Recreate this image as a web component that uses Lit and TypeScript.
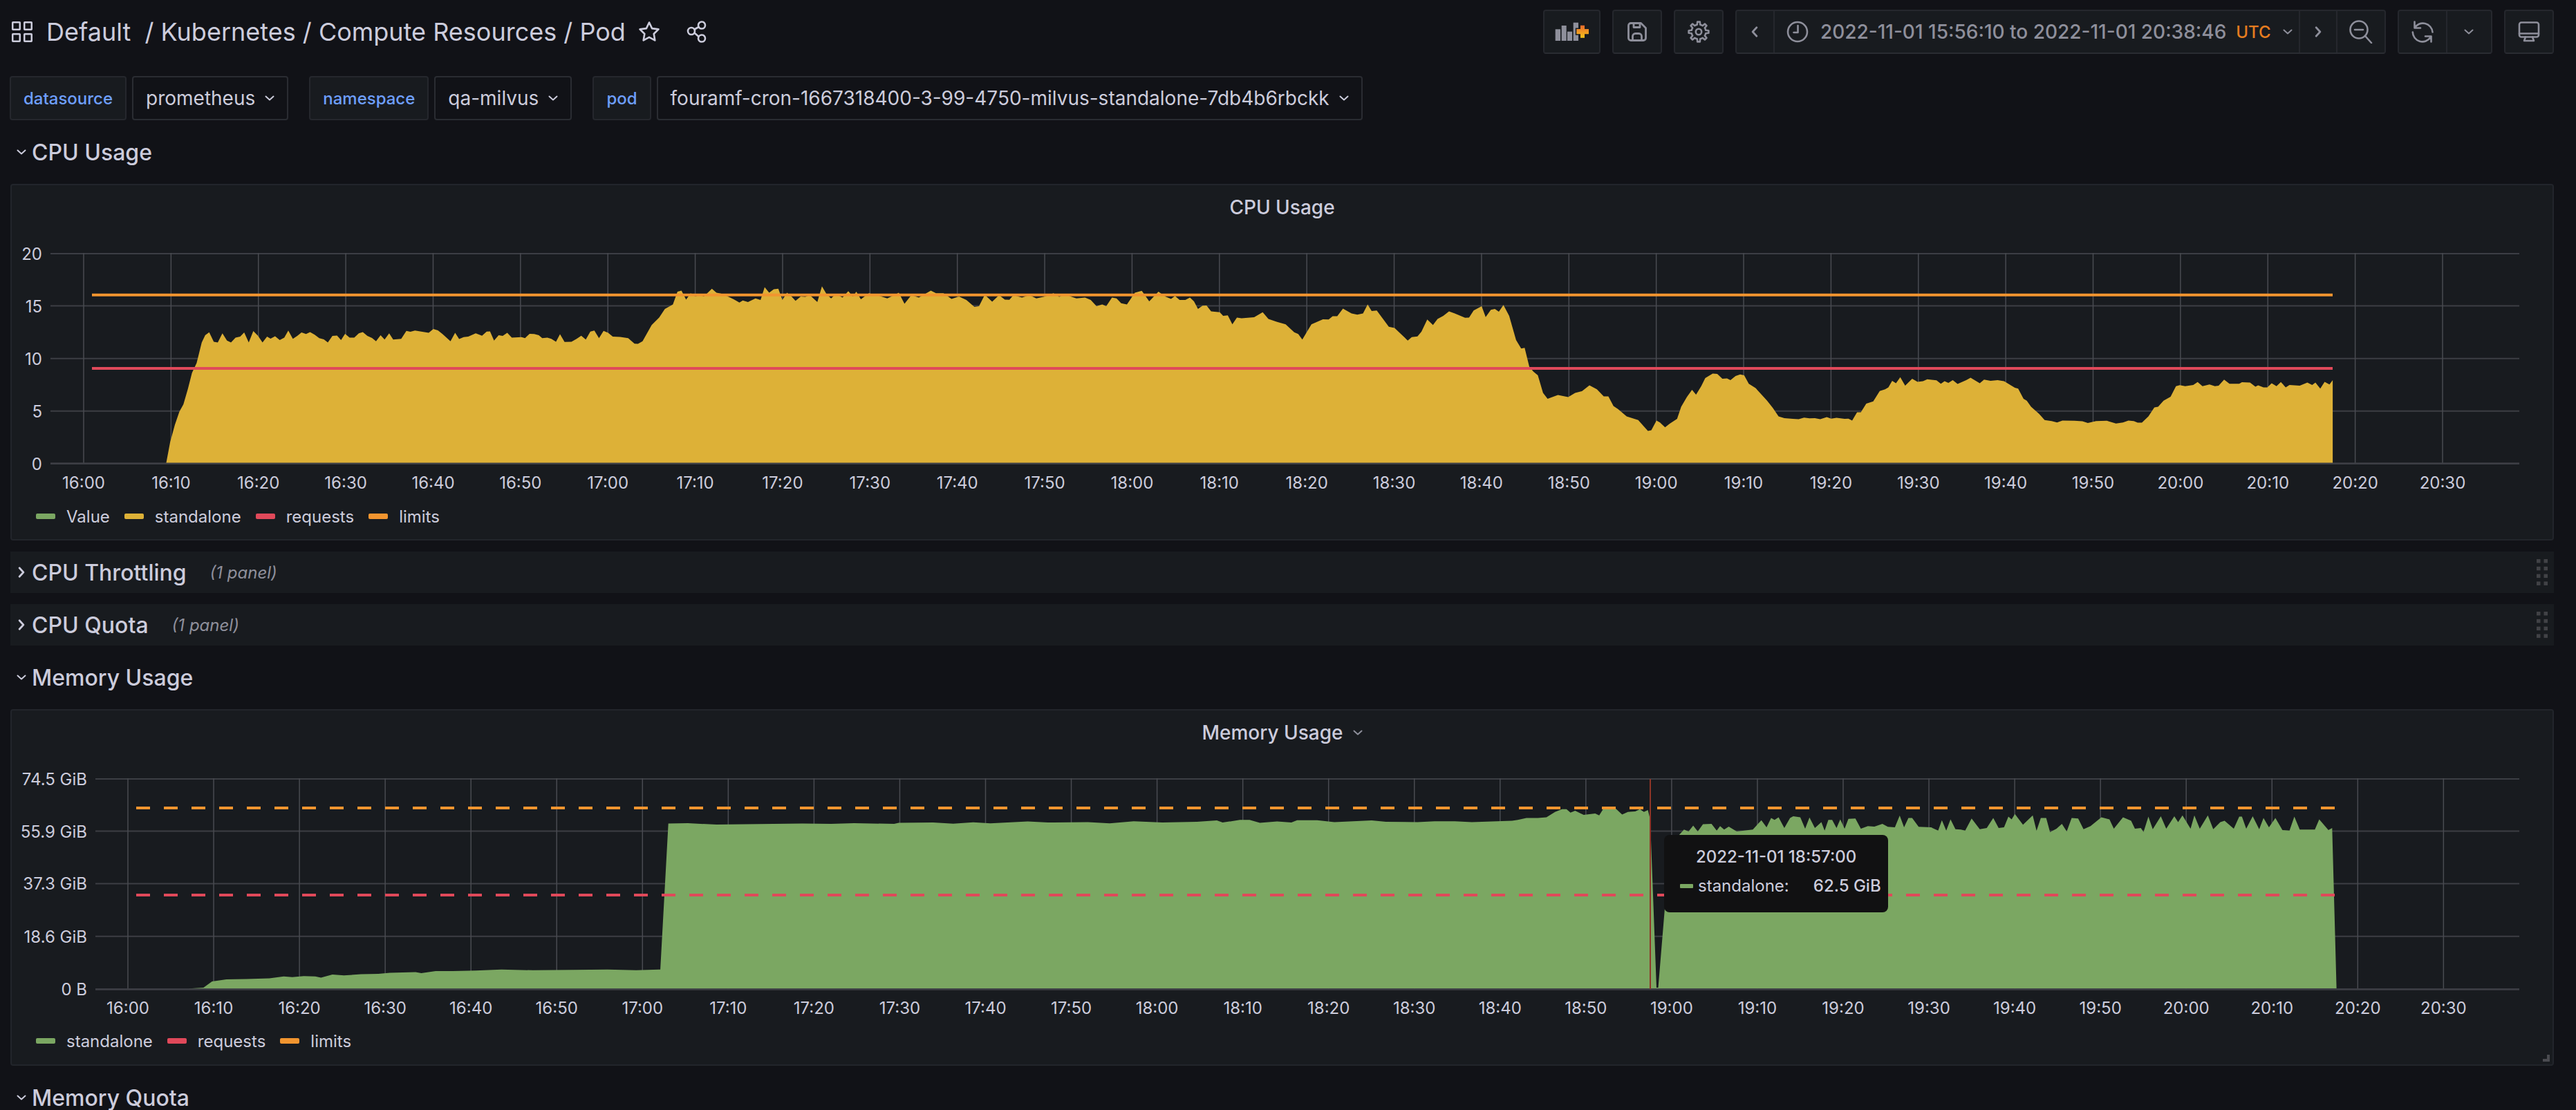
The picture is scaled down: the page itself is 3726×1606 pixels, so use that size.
import { LitElement, html, css, svg } from "lit";
import { customElement } from "lit/decorators.js";

type P = [number, number];
const map = (pts: number[][], ox: number, sx: number, oy: number, sy: number): P[] =>
  pts.map(([x, y]) => [ox + x / sx, oy + y / sy] as P);

const Z3 = [[264,1197],[290,1197],[297,1110],[305,1040],[313,985],[320,955],[328,890],[335,825],[343,785],[352,700],[358,670],[365,658],[373,697],[380,700],[388,662],[396,692],[403,700],[411,680],[419,676],[426,659],[434,700],[442,653],[450,672],[458,700],[466,676],[472,684],[480,674],[488,690],[496,680],[503,651],[511,685],[519,672],[526,659],[534,665],[541,657],[549,668],[557,682],[565,687],[572,700],[580,673],[588,671],[595,690],[602,664],[610,680],[618,680],[626,662],[633,657],[641,673],[649,681],[656,695],[664,670],[671,688],[679,662],[686,688],[700,685],[709,652],[716,656],[724,651],[748,660],[756,644],[764,650],[772,665],[779,680],[786,695],[794,660],[801,686],[809,678],[817,676],[830,662],[841,672],[849,655],[855,654],[862,692],[870,670],[877,673],[885,660],[893,680],[910,678],[916,682],[924,664],[932,665],[940,670],[946,682],[955,680],[962,685],[970,697],[977,666],[985,698],[997,697],[1006,685],[1014,672],[1022,688],[1030,655],[1037,651],[1045,682],[1053,652],[1061,660],[1069,676],[1082,677],[1096,682],[1107,705],[1113,706],[1121,695],[1137,628],[1150,597],[1160,562],[1174,543],[1182,490],[1189,486],[1197,523],[1205,497],[1213,510],[1220,505],[1228,510],[1242,478],[1250,495],[1258,498],[1270,510],[1280,522],[1290,535],[1296,527],[1305,533],[1318,518],[1327,525],[1334,472],[1342,495],[1350,480],[1358,478],[1365,525],[1373,495],[1381,510],[1388,528],[1397,510],[1405,512],[1413,505],[1426,533],[1434,468],[1442,500],[1450,518],[1458,500],[1470,515],[1480,488],[1488,510],[1494,490],[1502,522],[1516,497],[1530,505],[1548,518],[1560,505]];
const Z4 = [[0,495],[10,540],[22,505],[35,515],[56,486],[65,497],[78,497],[92,520],[105,510],[118,525],[132,553],[140,550],[150,503],[163,532],[175,505],[185,523],[193,524],[200,505],[215,515],[228,505],[240,518],[255,510],[270,497],[280,512],[290,500],[300,510],[310,518],[325,515],[335,525],[345,550],[355,543],[362,550],[372,515],[380,518],[388,538],[398,543],[412,495],[424,487],[437,530],[453,490],[465,510],[475,520],[482,508],[490,525],[500,525],[508,515],[515,530],[522,562],[530,548],[537,547],[545,572],[560,575],[566,590],[574,588],[582,625],[590,597],[598,600],[620,596],[635,575],[645,603],[660,615],[675,625],[690,658],[697,665],[704,688],[720,625],[740,604],[750,605],[757,592],[765,592],[775,560],[790,580],[800,585],[810,580],[818,543],[825,570],[834,568],[855,635],[865,640],[888,692],[895,678],[905,675],[912,655],[922,605],[932,628],[940,603],[950,590],[960,572],[970,580],[988,598],[995,597],[1003,568],[1017,550],[1024,595],[1033,565],[1040,562],[1047,573],[1055,545],[1065,590],[1077,690],[1086,725],[1092,722],[1100,800],[1107,820],[1115,835],[1124,908],[1132,932],[1150,917],[1168,925],[1180,908],[1192,901],[1205,877],[1218,893],[1230,922],[1238,922],[1247,962],[1255,975],[1270,1005],[1290,1020],[1307,1065],[1313,1062],[1322,1022],[1328,1030],[1337,1050],[1345,1035],[1358,1015],[1365,965],[1375,925],[1384,895],[1391,915],[1400,880],[1407,847],[1420,828],[1428,830],[1437,850],[1445,848],[1451,855],[1460,838],[1468,832],[1475,835],[1483,870],[1495,888],[1515,940],[1525,970],[1535,1005],[1545,1012],[1560,1015]];
const Z5 = [[130,1016],[140,1010],[150,1013],[160,1012],[170,1016],[182,1008],[190,1014],[200,1011],[215,1015],[222,1014],[229,1022],[238,988],[245,988],[255,952],[268,943],[280,900],[290,893],[296,885],[303,858],[310,868],[318,843],[327,878],[340,850],[350,862],[360,860],[368,852],[385,856],[393,870],[400,860],[407,867],[415,855],[424,871],[440,855],[448,845],[465,868],[473,853],[485,858],[498,855],[510,860],[530,887],[536,890],[546,932],[552,940],[560,965],[575,995],[585,1020],[598,1024],[608,1030],[618,1022],[640,1023],[655,1025],[665,1032],[680,1024],[700,1023],[717,1034],[730,1030],[740,1022],[750,1024],[757,1031],[765,1031],[777,1005],[788,968],[795,965],[805,940],[818,924],[828,880],[835,876],[845,880],[860,875],[868,863],[877,880],[890,873],[900,880],[907,878],[917,853],[927,870],[945,870],[950,864],[965,865],[975,882],[980,877],[990,885],[997,885],[1005,868],[1014,880],[1022,863],[1031,885],[1038,875],[1057,878],[1071,865],[1080,875],[1086,865],[1095,890],[1103,862],[1112,873],[1118,855],[1118,1197]];
const CPU: P[] = [...map(Z3, 0, 1.2062, 250, 2.851), ...map(Z4, 1300, 1.2062, 250, 2.851), ...map(Z5, 2500, 1.279, 250, 2.851)];

const Z6 = [[330,1234],[355,1232],[370,1215],[395,1209],[430,1208],[470,1206],[495,1201],[510,1203],[530,1200],[550,1201],[560,1204],[580,1196],[600,1198],[630,1195],[660,1194],[680,1191],[725,1189],[735,1192],[760,1186],[790,1186],[830,1185],[875,1182],[930,1184],[1000,1183],[1060,1182],[1110,1184],[1150,1182],[1152,1182],[1166,781],[1200,780],[1250,784],[1300,783],[1350,782],[1400,781],[1450,782],[1490,780],[1560,782]];
const Z7 = [[0,493],[60,492],[95,496],[130,491],[160,495],[225,488],[260,492],[330,490],[368,495],[410,487],[460,492],[520,489],[555,484],[565,492],[595,482],[612,482],[630,493],[660,488],[685,492],[695,483],[730,483],[760,490],[825,484],[850,489],[905,490],[935,487],[970,487],[1000,490],[1070,485],[1080,482],[1095,475],[1115,475],[1130,472],[1145,452],[1157,442],[1165,442],[1172,455],[1180,448],[1195,463],[1215,458],[1222,465],[1230,438],[1250,438],[1262,462],[1272,452],[1285,450],[1293,442],[1300,452],[1307,445],[1311,480],[1322,1110],[1325,1110],[1337,800],[1345,620],[1362,537],[1370,518],[1378,525],[1386,503],[1394,525],[1403,498],[1418,497],[1427,522],[1433,505],[1440,518],[1448,507],[1462,525],[1490,518],[1505,483],[1514,510],[1522,475],[1528,482],[1535,472],[1545,512],[1555,475]];
const Z8 = [[120,468],[133,472],[142,515],[150,473],[160,512],[172,490],[178,522],[185,482],[192,482],[200,512],[207,480],[215,515],[222,478],[235,477],[245,515],[258,505],[270,507],[285,497],[295,508],[308,510],[317,466],[325,510],[333,475],[340,475],[352,508],[375,510],[388,522],[395,483],[403,522],[411,480],[420,517],[430,518],[438,522],[450,477],[465,517],[478,512],[490,475],[500,512],[510,510],[518,470],[524,480],[530,460],[545,500],[563,465],[570,523],[578,475],[588,475],[595,528],[607,515],[617,497],[626,525],[635,475],[647,477],[657,517],[670,505],[690,472],[705,480],[713,515],[730,472],[745,485],[752,515],[763,512],[768,527],[777,470],[785,517],[800,468],[810,515],[825,468],[832,490],[840,465],[855,515],[862,465],[872,515],[887,465],[897,517],[910,490],[918,485],[935,515],[945,470],[950,470],[958,515],[970,468],[982,517],[990,475],[1000,510],[1012,475],[1025,520],[1038,522],[1047,470],[1057,518],[1085,518],[1093,480],[1110,520],[1117,512],[1125,1113]];
const MEM: P[] = [...map(Z6, 0, 1.2062, 780, 1.898), ...map(Z7, 1300, 1.2062, 1000, 2.5875), ...map(Z8, 2500, 1.279, 1000, 2.5875)];

const ptsStr = (p: P[]) => p.map(([x, y]) => `${x.toFixed(1)},${y.toFixed(1)}`).join(" ");
const TICKS = ["16:00","16:10","16:20","16:30","16:40","16:50","17:00","17:10","17:20","17:30","17:40","17:50","18:00","18:10","18:20","18:30","18:40","18:50","19:00","19:10","19:20","19:30","19:40","19:50","20:00","20:10","20:20","20:30"];

const C_YELLOW = "#ddb137", C_GREEN = "#7ba762", C_RED = "#e0495a", C_ORANGE = "#f2952f";

function gearPath(cx: number, cy: number, teeth: number, ro: number, ri: number) {
  const out: string[] = [];
  const step = (Math.PI * 2) / teeth;
  for (let i = 0; i < teeth; i++) {
    const a = i * step - Math.PI / 2;
    const pts: [number, number][] = [[ri, a - step * 0.5], [ri, a - step * 0.27], [ro, a - step * 0.16], [ro, a + step * 0.16], [ri, a + step * 0.27]];
    pts.forEach(([r, t], j) => out.push(`${i === 0 && j === 0 ? "M" : "L"}${(cx + r * Math.cos(t)).toFixed(2)} ${(cy + r * Math.sin(t)).toFixed(2)}`));
  }
  return out.join(" ") + "Z";
}

const chevDown = (cls = "chev") => html`<svg class=${cls} viewBox="0 0 14 8"><path d="M1.5 1.5 7 6.5 12.5 1.5"/></svg>`;
const chevRight = html`<svg class="chev-r" viewBox="0 0 8 14"><path d="M1.5 1.5 6.5 7 1.5 12.5"/></svg>`;
const grip = html`<svg class="grip" viewBox="0 0 17 39">${[0, 1, 2, 3].map((r) => svg`<rect x="0" y=${r * 10.8} width="5.5" height="5.5"/><rect x="10.5" y=${r * 10.8} width="5.5" height="5.5"/>`)}</svg>`;

@customElement("app-root")
export class AppRoot extends LitElement {
  static styles = css`
    :host { display: block; height: 1606px; overflow: hidden; background: #111217; color: #ccccdc; font-family: Inter, "Liberation Sans", sans-serif; }
    .page { display: flex; flex-direction: column; padding: 14px 32px 0 15px; }
    svg { display: block; flex: none; }
    .toolbar { display: flex; align-items: center; justify-content: space-between; height: 64px; }
    .left, .right { display: flex; align-items: center; }
    .title { font-size: 36px; line-height: 44px; margin-left: 20px; white-space: pre; }
    .ico { fill: none; stroke: currentColor; stroke-linecap: round; stroke-linejoin: round; }
    .apps { width: 30px; height: 30px; margin-left: 2px; }
    .star { width: 32px; height: 32px; margin-left: 18px; }
    .share { width: 32px; height: 32px; margin-left: 37px; }
    .right { gap: 17px; color: #8e8f9b; }
    .btn { display: flex; align-items: center; justify-content: center; height: 64px; width: 72px; background: #181b1f; border: 2px solid #25272d; border-bottom-color: #2a2c32; border-radius: 4px; box-sizing: border-box; }
    .btn.add { width: 83px; }
    .group { display: flex; height: 64px; background: #181b1f; border: 2px solid #25272d; border-bottom-color: #2a2c32; border-radius: 4px; box-sizing: border-box; }
    .seg { display: flex; align-items: center; justify-content: center; box-sizing: border-box; border-left: 2px solid #25272d; }
    .seg:first-child { border-left: none; }
    .prev { width: 53px; }
    .range { width: 762px; justify-content: flex-start; padding-left: 17px; }
    .next { width: 54px; }
    .zoomout { width: 70px; }
    .time { width: 941px; }
    .refresh { width: 137px; }
    .sync { width: 69px; }
    .ref-ch { width: 66px; }
    .clock { width: 32px; height: 32px; }
    .range-text { font-size: 28px; font-weight: 500; margin-left: 17px; white-space: nowrap; }
    .utc { font-size: 24px; font-weight: 500; color: #e57c1f; margin-left: 14px; }
    .chev { width: 14px; height: 8px; fill: none; stroke: currentColor; stroke-width: 2; stroke-linecap: round; stroke-linejoin: round; }
    .chev-r { width: 10px; height: 16px; fill: none; stroke: currentColor; stroke-width: 2.4; stroke-linecap: round; stroke-linejoin: round; }
    .utc-ch { margin-left: 17px; }

    .vars { display: flex; height: 64px; margin: 32px 0 0 -1px; }
    .var { display: flex; gap: 8px; margin-right: 30px; }
    .var-label { display: flex; align-items: center; padding: 0 18px; background: #181b1f; border: 2px solid #25272d; border-radius: 4px; font-size: 24px; font-weight: 500; color: #6e9fff; box-sizing: border-box; }
    .var-value { display: flex; align-items: center; gap: 14px; padding: 0 18px; border: 2px solid #2a2c32; border-radius: 4px; font-size: 28px; box-sizing: border-box; white-space: nowrap; }

    .dash { display: flex; flex-direction: column; gap: 16px; margin-top: 16px; }
    .row { display: flex; align-items: center; height: 60px; font-size: 32px; font-weight: 500; }
    .row.closed { background: #181b1f; }
    .row svg.chev, .row svg.chev-r { color: #ccccdc; }
    .row-ch { display: flex; justify-content: center; width: 31px; }
    .row-name { white-space: nowrap; }
    .row-count { font-size: 24px; font-style: italic; font-weight: 400; color: #8e8f9b; margin-left: 34px; }
    .grip { width: 17px; height: 39px; margin-left: auto; margin-right: 8px; fill: #414246; }
    .panel { position: relative; display: flex; flex-direction: column; height: 516px; background: #181b1f; border: 2px solid #22252b; border-radius: 4px; box-sizing: border-box; }
    .panel-head { display: flex; align-items: center; justify-content: center; gap: 14px; height: 64px; font-size: 28px; font-weight: 500; flex: none; }
    .panel-head .chev { color: #8e8f9b; }
    text { font-family: Inter, "Liberation Sans", sans-serif; font-size: 24px; fill: #ccccdc; }
    .legend { display: flex; align-items: center; padding-left: 35px; font-size: 24px; flex: none; }
    .legend.a { height: 64px; }
    .legend.b { height: 56px; }
    .lg { display: flex; align-items: center; gap: 16px; margin-right: 21px; }
    .sw { display: block; width: 28px; height: 8px; border-radius: 2px; }
    .tooltip { position: absolute; left: 2390px; top: 180px; width: 324px; height: 112px; background: #111112; border-radius: 8px; font-size: 24px; font-weight: 500; }
    .tt-time { padding: 18px 0 0 46px; line-height: 28px; }
    .tt-row { display: flex; align-items: center; margin-top: 14px; padding-left: 23px; line-height: 28px; }
    .tt-sw { width: 19px; height: 6px; border-radius: 1px; margin-right: 7px; }
    .tt-label { font-weight: 400; }
    .tt-val { margin-left: 35px; }
    .resize { position: absolute; right: 4px; bottom: 4px; width: 10px; height: 10px; }
  `;

  private panelAdd() {
    return html`<svg width="50" height="28" viewBox="0 0 50 28">
      <defs><linearGradient id="pg" x1="0" y1="0" x2="0" y2="1"><stop offset="0" stop-color="#e8692c"/><stop offset="1" stop-color="#f7c31a"/></linearGradient></defs>
      <g fill="#8e8f9b"><rect x="0.7" y="10.3" width="7.3" height="16.7"/><rect x="9.7" y="5" width="7" height="22"/><rect x="18" y="13.7" width="7" height="13.3"/><rect x="26.7" y="0.7" width="7.3" height="26.3"/></g>
      <path d="M37 4.7h6v5.3h6v7.3h-6v5.4h-6v-5.4h-5.7v-7.3H37z" fill="url(#pg)" stroke="#181b1f" stroke-width="3" paint-order="stroke"/>
    </svg>`;
  }

  private chart1() {
    const hl: [number, string][] = [[367, "20"], [442.6, "15"], [518.7, "10"], [594.8, "5"], [670.5, "0"]];
    const xAt = (i: number) => 121 + i * 126.37;
    return svg`<svg width="3675" height="383" viewBox="17 332 3675 383">
      ${hl.map(([y]) => svg`<line x1="73" x2="3644" y1=${y} y2=${y} stroke="#3c3e44" stroke-width="2"/>`)}
      ${TICKS.map((_, i) => svg`<line x1=${xAt(i)} x2=${xAt(i)} y1="366" y2="671" stroke="#494b51" stroke-width="1.5"/>`)}
      <polygon points=${ptsStr(CPU) + " 219,669.9"} fill=${C_YELLOW}/>
      <line x1="73" x2="3644" y1="670.8" y2="670.8" stroke="#3c3e44" stroke-width="2.5"/>
      <line x1="133" x2="3374" y1="426.8" y2="426.8" stroke=${C_ORANGE} stroke-width="4"/>
      <line x1="133" x2="3374" y1="533" y2="533" stroke=${C_RED} stroke-width="4"/>
      ${hl.map(([y, t]) => svg`<text x="61" y=${y + 9} text-anchor="end">${t}</text>`)}
      ${TICKS.map((t, i) => svg`<text x=${xAt(i)} y="707" text-anchor="middle">${t}</text>`)}
    </svg>`;
  }

  private chart2() {
    const hl: [number, string][] = [[1127, "74.5 GiB"], [1202.5, "55.9 GiB"], [1278.4, "37.3 GiB"], [1354.8, "18.6 GiB"], [1431, "0 B"]];
    const xAt = (i: number) => 185 + i * 124.05;
    return svg`<svg width="3675" height="386" viewBox="17 1092 3675 386">
      ${hl.map(([y]) => svg`<line x1="138" x2="3644" y1=${y} y2=${y} stroke="#3c3e44" stroke-width="2"/>`)}
      ${TICKS.map((_, i) => svg`<line x1=${xAt(i)} x2=${xAt(i)} y1="1126" y2="1432" stroke="#494b51" stroke-width="1.5"/>`)}
      <polygon points=${ptsStr(MEM) + " 274,1430.5"} fill=${C_GREEN}/>
      <line x1="138" x2="3644" y1="1431.5" y2="1431.5" stroke="#3c3e44" stroke-width="2.5"/>
      <line x1="197" x2="3378" y1="1169" y2="1169" stroke=${C_ORANGE} stroke-width="4" stroke-dasharray="20 20"/>
      <line x1="197" x2="3378" y1="1295" y2="1295" stroke=${C_RED} stroke-width="4" stroke-dasharray="20 20"/>
      <line x1="2387" x2="2387" y1="1127" y2="1431" stroke="#8f3527" stroke-width="2"/>
      ${hl.map(([y, t]) => svg`<text x="126" y=${y + 9} text-anchor="end">${t}</text>`)}
      ${TICKS.map((t, i) => svg`<text x=${xAt(i)} y="1467" text-anchor="middle">${t}</text>`)}
    </svg>`;
  }

  private legend(cls: string, items: [string, string][]) {
    return html`<div class="legend ${cls}">${items.map(([c, t]) => html`<div class="lg"><span class="sw" style="background:${c}"></span><span>${t}</span></div>`)}</div>`;
  }

  private openRow(name: string) {
    return html`<div class="row"><span class="row-ch">${chevDown()}</span><span class="row-name">${name}</span></div>`;
  }

  private closedRow(name: string) {
    return html`<div class="row closed"><span class="row-ch">${chevRight}</span><span class="row-name">${name}</span><span class="row-count">(1 panel)</span>${grip}</div>`;
  }

  render() {
    return html`<div class="page">
      <div class="toolbar">
        <div class="left">
          <svg class="apps ico" viewBox="0 0 30 30" stroke-width="2.5"><rect x="1.25" y="1.25" width="10.5" height="10.5" rx="0.5"/><rect x="18.25" y="1.25" width="10.5" height="10.5" rx="0.5"/><rect x="1.25" y="18.25" width="10.5" height="10.5" rx="0.5"/><rect x="18.25" y="18.25" width="10.5" height="10.5" rx="0.5"/></svg>
          <span class="title">Default  / Kubernetes / Compute Resources / Pod</span>
          <svg class="star ico" viewBox="0 0 32 32" stroke-width="2.6"><path d="M16 2.5l4.1 8.6 9.4 1.3-6.8 6.6 1.6 9.4L16 23.9l-8.3 4.5 1.6-9.4-6.8-6.6 9.4-1.3z"/></svg>
          <svg class="share ico" viewBox="0 0 32 32" stroke-width="2.6"><circle cx="8" cy="15" r="5"/><circle cx="23" cy="6.5" r="5"/><circle cx="23" cy="25.5" r="5"/><path d="M12.4 12.5 18.6 9M12.4 17.5l6.2 5.5"/></svg>
        </div>
        <div class="right">
          <div class="btn add">${this.panelAdd()}</div>
          <div class="btn"><svg class="ico" width="28" height="28" viewBox="0 0 28 28" stroke-width="2.8"><path d="M5 1.5h14.5l7 7v14.5a3.5 3.5 0 0 1-3.5 3.5H5a3.5 3.5 0 0 1-3.5-3.5V5A3.5 3.5 0 0 1 5 1.5z"/><path d="M9 1.5v6h9v-6M7.5 26.5v-6a4 4 0 0 1 4-4h5a4 4 0 0 1 4 4v6"/></svg></div>
          <div class="btn"><svg class="ico" width="32" height="32" viewBox="0 0 32 32" stroke-width="2.6"><path d=${gearPath(16, 16, 8, 14.5, 10.5)}/><circle cx="16" cy="16" r="4.2"/></svg></div>
          <div class="group time">
            <div class="seg prev"><svg class="chev-r" viewBox="0 0 8 14"><path d="M6.5 1.5 1.5 7l5 5.5"/></svg></div>
            <div class="seg range">
              <svg class="clock ico" viewBox="0 0 32 32" stroke-width="2.6"><circle cx="16" cy="16" r="14"/><path d="M16.5 7v10h-6"/></svg>
              <span class="range-text">2022-11-01 15:56:10 to 2022-11-01 20:38:46</span>
              <span class="utc">UTC</span>
              ${chevDown("chev utc-ch")}
            </div>
            <div class="seg next">${chevRight}</div>
            <div class="seg zoomout"><svg class="ico" width="34" height="34" viewBox="0 0 34 34" stroke-width="2.6"><circle cx="14" cy="14" r="12.5"/><path d="M8 14h12M23 23l9 10"/></svg></div>
          </div>
          <div class="group refresh">
            <div class="seg sync"><svg class="ico" width="32" height="32" viewBox="0 0 32 32" stroke-width="2.6"><path d="M4.5 1.5V10.5H13M4.5 10.5A14 14 0 0 1 30.5 16.5"/><path d="M1.8 16.5A14 14 0 0 0 27.5 24M28.5 30.5V22.5H20"/></svg></div>
            <div class="seg ref-ch">${chevDown()}</div>
          </div>
          <div class="btn"><svg class="ico" width="32" height="30" viewBox="0 0 32 30" stroke-width="2.6"><rect x="2" y="1.5" width="28" height="21" rx="3"/><path d="M2 17.5h28M11 22.5l-2 5.5h14l-2-5.5"/></svg></div>
        </div>
      </div>

      <div class="vars">
        <div class="var"><div class="var-label">datasource</div><div class="var-value">prometheus ${chevDown()}</div></div>
        <div class="var"><div class="var-label">namespace</div><div class="var-value">qa-milvus ${chevDown()}</div></div>
        <div class="var"><div class="var-label">pod</div><div class="var-value">fouramf-cron-1667318400-3-99-4750-milvus-standalone-7db4b6rbckk ${chevDown()}</div></div>
      </div>

      <div class="dash">
        ${this.openRow("CPU Usage")}
        <div class="panel">
          <div class="panel-head">CPU Usage</div>
          ${this.chart1()}
          ${this.legend("a", [[C_GREEN, "Value"], [C_YELLOW, "standalone"], [C_RED, "requests"], [C_ORANGE, "limits"]])}
        </div>
        ${this.closedRow("CPU Throttling")}
        ${this.closedRow("CPU Quota")}
        ${this.openRow("Memory Usage")}
        <div class="panel">
          <div class="panel-head"><span>Memory Usage</span>${chevDown()}</div>
          ${this.chart2()}
          ${this.legend("b", [[C_GREEN, "standalone"], [C_RED, "requests"], [C_ORANGE, "limits"]])}
          <div class="tooltip">
            <div class="tt-time">2022-11-01 18:57:00</div>
            <div class="tt-row"><span class="tt-sw" style="background:${C_GREEN}"></span><span class="tt-label">standalone:</span><span class="tt-val">62.5 GiB</span></div>
          </div>
          <svg class="resize" viewBox="0 0 10 10"><path d="M6 0h4v10H0V6h6z" fill="#4a4b50"/></svg>
        </div>
        ${this.openRow("Memory Quota")}
      </div>
    </div>`;
  }
}
